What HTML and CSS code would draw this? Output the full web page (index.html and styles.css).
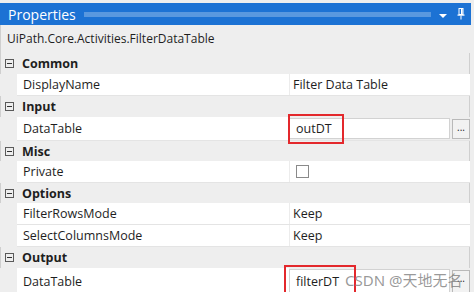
FILE: index.html
```html
<!DOCTYPE html>
<html lang="en">
<head>
    <meta charset="UTF-8">
    <title>Properties</title>
    <link rel="stylesheet" href="styles.css">
</head>
<body>
    <div class="panel">
        <div class="titlebar">
            <span class="title">Properties</span>
            <span class="dots"></span>
            <span class="drop"></span>
            <svg class="pin" width="8" height="12" viewBox="0 0 8 12">
                <rect x="2" y="0.5" width="4" height="6" fill="none" stroke="#fff" stroke-width="1"/>
                <rect x="4" y="1" width="1.5" height="5" fill="#fff"/>
                <rect x="0.5" y="6.5" width="7" height="1.2" fill="#fff"/>
                <rect x="3.5" y="7.5" width="1" height="4" fill="#fff"/>
            </svg>
        </div>
        <div class="typename">UiPath.Core.Activities.FilterDataTable</div>

        <div class="cat"><span class="toggle"></span>Common</div>
        <div class="row">
            <div class="name">DisplayName</div>
            <div class="value">Filter Data Table</div>
        </div>

        <div class="cat"><span class="toggle"></span>Input</div>
        <div class="row tall">
            <div class="name">DataTable</div>
            <div class="value edit">
                <div class="box">outDT</div>
                <div class="more">...</div>
                <div class="mark mark-in"></div>
            </div>
        </div>

        <div class="cat short"><span class="toggle"></span>Misc</div>
        <div class="row">
            <div class="name">Private</div>
            <div class="value"><span class="check"></span></div>
        </div>

        <div class="cat short"><span class="toggle"></span>Options</div>
        <div class="row">
            <div class="name">FilterRowsMode</div>
            <div class="value">Keep</div>
        </div>
        <div class="row">
            <div class="name">SelectColumnsMode</div>
            <div class="value">Keep</div>
        </div>

        <div class="cat"><span class="toggle"></span>Output</div>
        <div class="row last">
            <div class="name">DataTable</div>
            <div class="value edit">
                <div class="box">filterDT</div>
                <div class="more">...</div>
                <div class="mark mark-out"></div>
            </div>
        </div>

        <div class="watermark">CSDN @天地无名</div>
    </div>
</body>
</html>
```

FILE: styles.css
```css
body {
    margin: 0;
    font-family: "Open Sans", "Noto Sans CJK SC", sans-serif;
    font-size: 12.5px;
    color: #1e1e1e;
    background: #f3f3f3;
}
.panel {
    position: relative;
    width: 474px;
    height: 292px;
    overflow: hidden;
    background: #eeeeee;
    padding-top: 3px;
    box-sizing: border-box;
}
.titlebar {
    display: flex;
    align-items: center;
    height: 22px;
    width: 471px;
    background: #1c72d4;
    color: white;
    padding-left: 8px;
    box-sizing: border-box;
}
.title {
    font-size: 14px;
    margin-right: 8px;
}
.dots {
    flex: 1;
    height: 5px;
    background-image: radial-gradient(rgba(255, 255, 255, 0.28) 0.7px, transparent 0.9px);
    background-size: 2px 2px;
    margin-right: 8px;
}
.drop {
    width: 0;
    height: 0;
    border-left: 4px solid transparent;
    border-right: 4px solid transparent;
    border-top: 4px solid white;
    margin: 3px 10px 0 0;
}
.pin {
    margin-right: 6px;
}
.typename {
    height: 28px;
    line-height: 28px;
    padding-left: 6px;
    font-size: 12px;
    border-left: 1px solid #cfcfcf;
}
.cat {
    display: flex;
    align-items: center;
    height: 21px;
    font-weight: bold;
    font-size: 12.5px;
    border-left: 1px solid #cfcfcf;
    border-right: 1px solid #cfcfcf;
    width: 470px;
    box-sizing: border-box;
}
.cat.short {
    height: 20px;
}
.toggle {
    position: relative;
    width: 7px;
    height: 7px;
    border: 1px solid #5a5a5a;
    margin: 0 8px 0 4px;
    flex: none;
}
.toggle::after {
    content: "";
    position: absolute;
    left: 1px;
    top: 3px;
    width: 5px;
    height: 1px;
    background: #333;
}
.row {
    display: flex;
    height: 21px;
    margin-left: 17px;
    width: 453px;
    border-bottom: 1px solid #e4e4e4;
}
.row.tall {
    height: 23px;
}
.row.last {
    height: 26px;
    border-bottom: none;
}
.name {
    width: 266px;
    padding-left: 6px;
    background: white;
    display: flex;
    align-items: center;
}
.value {
    flex: 1;
    display: flex;
    align-items: center;
    padding-left: 3px;
    background: white;
    border-left: 1px solid #ececec;
}
.value.edit {
    position: relative;
    padding-left: 0;
    background: #eeeeee;
    border-left: none;
    gap: 2px;
}
.box {
    flex: 1;
    align-self: stretch;
    display: flex;
    align-items: center;
    padding-left: 6px;
    background: white;
    border: 1px solid #d2d2d2;
    margin: 1px 0;
}
.more {
    width: 18px;
    align-self: stretch;
    margin: 2px 0 1px;
    border: 1px solid #b9b9b9;
    background: #f2f2f2;
    font-size: 10px;
    text-align: center;
    line-height: 14px;
    box-sizing: border-box;
}
.check {
    width: 11px;
    height: 11px;
    border: 1px solid #8a8a8a;
    margin-left: 3px;
    background: white;
}
.mark {
    position: absolute;
    border: 2px solid #e3282c;
    box-sizing: border-box;
}
.mark-in {
    left: -1px;
    top: -3px;
    width: 56px;
    height: 30px;
}
.mark-out {
    left: -5px;
    top: -3px;
    width: 72px;
    height: 32px;
}
.watermark {
    position: absolute;
    left: 345px;
    top: 269px;
    font-family: "Noto Sans", "Noto Sans CJK SC", sans-serif;
    font-size: 15px;
    color: rgba(120, 120, 120, 0.75);
    white-space: nowrap;
}
```
